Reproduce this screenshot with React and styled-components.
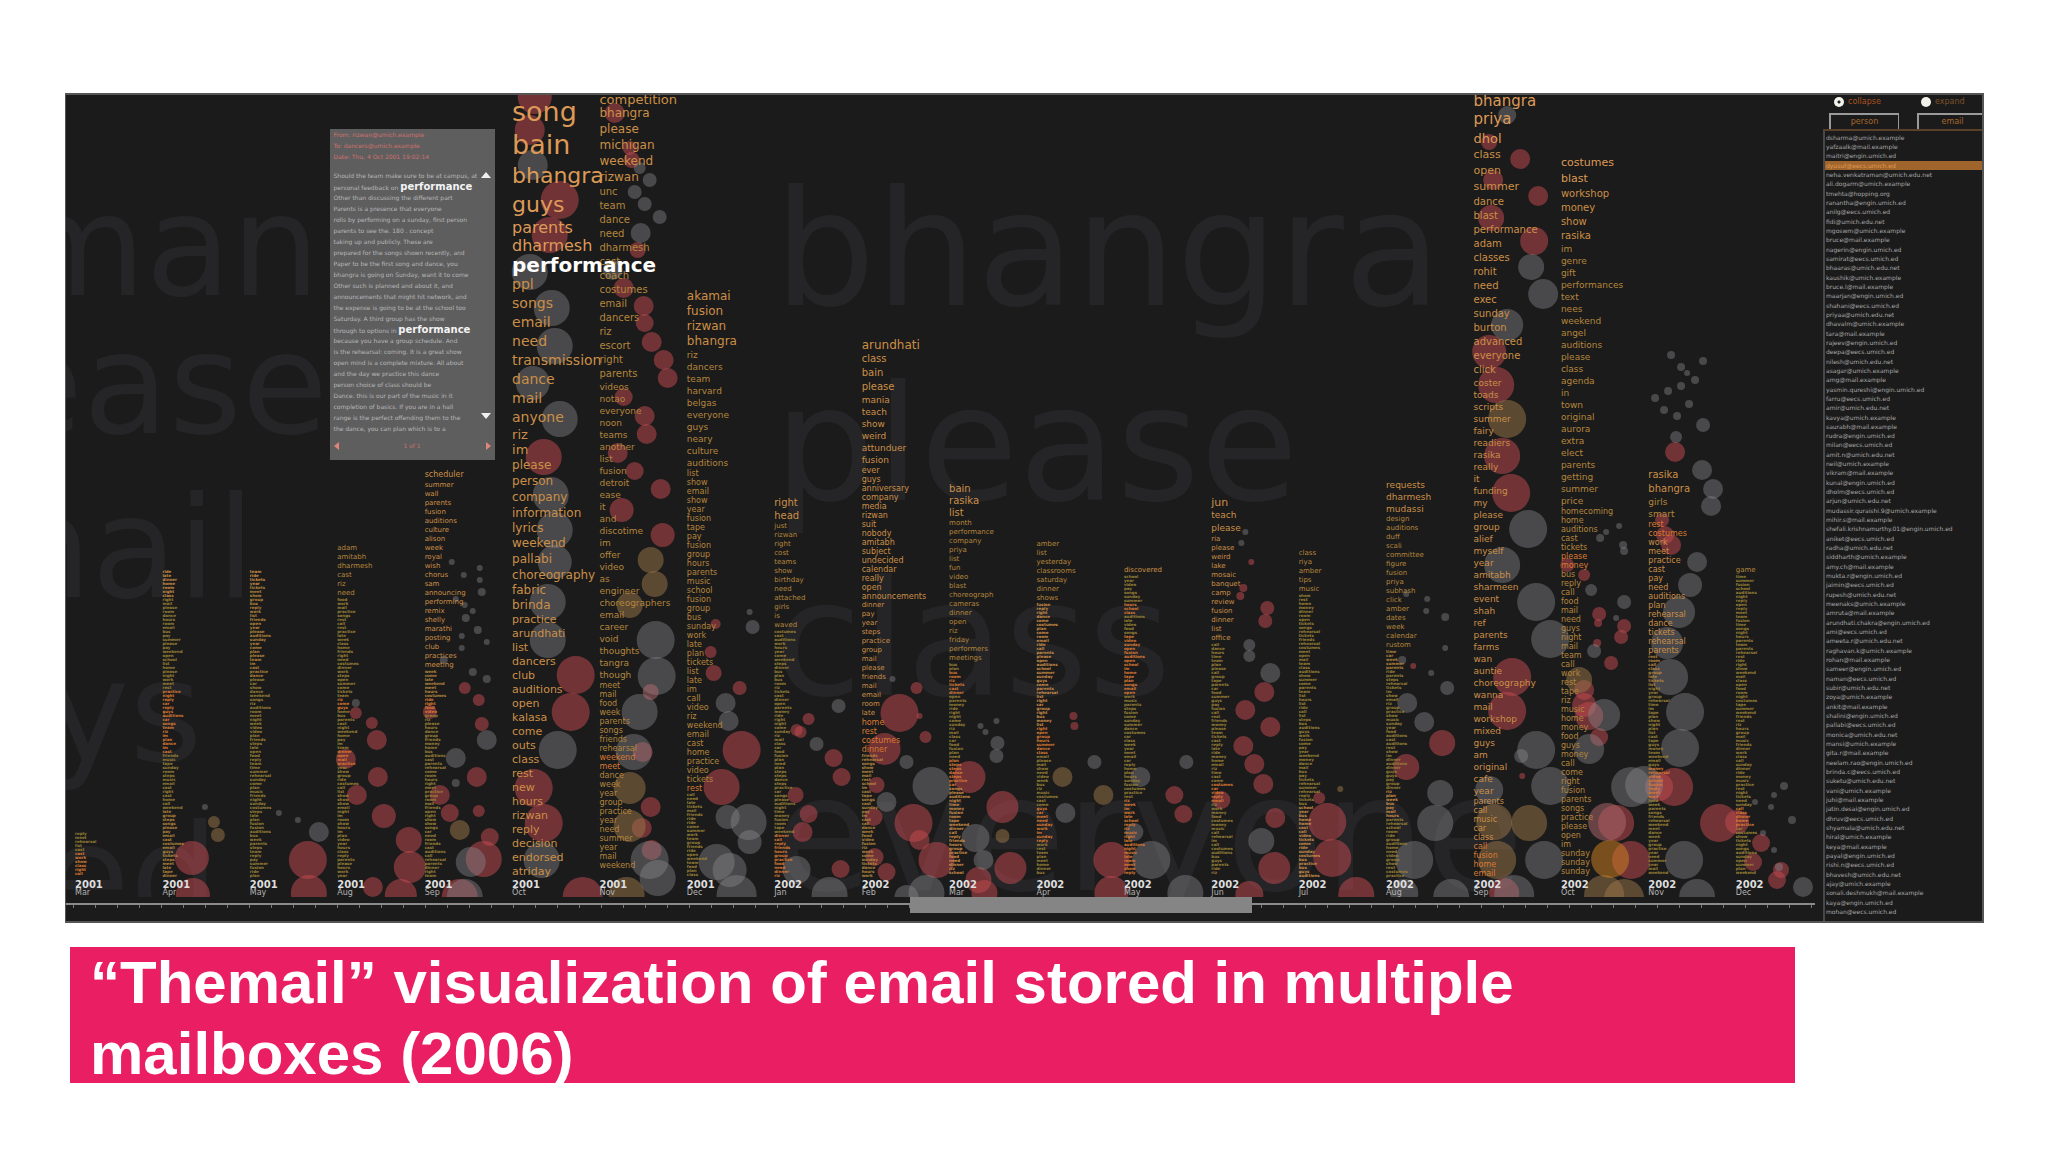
import React, { useState } from "react";
import styled, { createGlobalStyle } from "styled-components";

const GlobalStyle = createGlobalStyle`
  body {
    margin: 0;
    background: #ffffff;
  }
`;

const Page = styled.main`
  padding: 93px 64px 0 65px;
  font-family: "DejaVu Sans", Verdana, sans-serif;
`;

const Frame = styled.section`
  display: flex;
  border: 2px solid #565656;
  border-left-width: 1px;
  background: #1b1b1b;
  overflow: hidden;
`;

const Timeline = styled.div`
  flex: 1;
  min-width: 0;
`;

const Plot = styled.div`
  position: relative;
  height: 802px;
  overflow: hidden;
`;

const Backdrop = styled.div`
  position: absolute;
  top: ${(props) => props.$top}px;
  left: ${(props) => props.$left};
  color: #252527;
  font-size: ${(props) => props.$size}px;
  white-space: nowrap;
`;

const BackdropWord = styled.div`
  height: ${(props) => props.$line}px;
  line-height: ${(props) => props.$line}px;
`;

const Bubbles = styled.svg`
  position: absolute;
  inset: 0;
  width: 100%;
  height: 100%;
`;

const Months = styled.div`
  position: relative;
  display: flex;
  height: 100%;
  padding-left: 9px;
`;

const Month = styled.div`
  display: flex;
  flex: 1 1 0;
  flex-direction: column;
  justify-content: space-between;
  min-width: 0;
  white-space: nowrap;
`;

const Words = styled.div`
  height: 784px;
  padding-top: ${(props) => props.$top}px;
  box-sizing: border-box;
  overflow: visible;
`;

const Word = styled.div`
  height: ${(props) => props.$line}px;
  line-height: ${(props) => props.$line}px;
  font-size: ${(props) => props.$size}px;
  font-weight: ${(props) => (props.$size < 6 ? "bold" : "normal")};
  color: ${(props) => props.$color};
`;

const Picked = styled(Word)`
  position: relative;
  z-index: 2;
  font-weight: bold;
`;

const MonthLabel = styled.div`
  color: #b4b4b4;
  font-size: 8px;
  line-height: 8px;
`;

const Year = styled.div`
  color: #dedede;
  font-size: 10px;
  font-weight: bold;
`;

const Axis = styled.div`
  height: 24px;
  padding-right: 8px;
`;

const Scroll = styled.input`
  display: block;
  width: 100%;
  height: 16px;
  margin: 0;
  appearance: none;
  background:
    linear-gradient(#8a8a8a, #8a8a8a) 0 6px / 100% 2px no-repeat,
    repeating-linear-gradient(90deg, #777777 0 1px, transparent 1px 22px) 7px 8px / 100% 3px no-repeat;

  &::-webkit-slider-thumb {
    appearance: none;
    width: 342px;
    height: 16px;
    background: #858585;
  }
`;

const Mail = styled.article`
  position: absolute;
  top: 34px;
  left: 15%;
  width: 165px;
  height: 331px;
  padding: 0 4px;
  box-sizing: border-box;
  background: #5e5e5f;
  color: #b8b8b8;
  font-size: 6px;
  line-height: 11px;
  white-space: nowrap;
  z-index: 3;
`;

const MailHead = styled.header`
  padding-bottom: 8px;
  color: #d0716c;
`;

const MailBody = styled.div`
  display: flex;
  justify-content: space-between;
`;

const MailLine = styled.div`
  height: 11px;

  b {
    color: #f4f4f4;
    font-size: 10px;
  }
`;

const Arrows = styled.div`
  display: flex;
  flex-direction: column;
  justify-content: space-between;
  height: 250px;
`;

const ArrowButton = styled.button`
  display: flex;
  padding: 0;
  border: 0;
  background: none;
  color: ${(props) => props.$color || "#f0f0f0"};
`;

const Pager = styled.footer`
  display: flex;
  align-items: center;
  justify-content: space-between;
  padding-top: 6px;
  color: #c5706c;
`;

const Sidebar = styled.aside`
  display: flex;
  flex-direction: column;
  width: 159px;
`;

const Modes = styled.div`
  display: flex;
  height: 18px;
  padding-left: 11px;
`;

const Mode = styled.label`
  display: flex;
  align-items: center;
  flex: 0 0 87px;
  gap: 4px;
  height: 13px;
  color: ${(props) => props.$color};
  font-size: 8px;
`;

const Radio = styled.input`
  width: 10px;
  height: 10px;
  margin: 0;
  appearance: none;
  border-radius: 50%;
  background: #f2f2ea;

  &:checked {
    background: radial-gradient(circle, #222222 0 1px, #f2f2ea 2px);
  }
`;

const Sorts = styled.div`
  display: flex;
  gap: 18px;
  padding-left: 6px;
  border-bottom: 2px solid #5a4028;
`;

const SortButton = styled.button`
  flex: 0 0 70px;
  height: 16px;
  padding: 0;
  border: 1px solid #9a9a9a;
  border-width: 2px 1px 0 2px;
  background: #1b1b1b;
  color: #a8682c;
  font-family: inherit;
  font-size: 8px;
  line-height: 12px;
`;

const People = styled.ul`
  display: flex;
  flex: 1;
  flex-direction: column;
  min-height: 0;
  margin: 0;
  padding: 2px 0 4px;
  border-left: 2px solid #484848;
  list-style: none;
`;

const Person = styled.li`
  flex: 1 1 0;
  display: flex;
  align-items: center;
  min-height: 0;
  padding-left: 1px;
  background: ${(props) => (props.$active ? "#a0652d" : "none")};
  color: ${(props) => (props.$active ? "#e09a52" : "#a8a8a8")};
  font-size: 6px;
  line-height: 6px;
`;

const Caption = styled.h1`
  height: 136px;
  margin: 24px 189px 0 5px;
  padding: 0 20px;
  background: #e91e63;
  color: #ffffff;
  font-family: "Liberation Sans", Arial, sans-serif;
  font-size: 60px;
  line-height: 71px;
`;

const BRIGHT = "#dd9a57";
const ORANGE = "#cb8f47";
const AMBER = "#b4863c";
const OLIVE = "#9a8236";
const RUST = "#d97a32";

const LEFT_WORDS = [["roman", 116], ["please", 160], ["email", 168], ["guys", 160], ["need", 168]];
const RIGHT_WORDS = [["bhangra", 195], ["please", 195], ["class", 195], ["everyone", 195]];

const VOCAB = (
  "class list dance need please show team email practice open dinner right riz guys parents week " +
  "come group year fusion songs mail hours rest meet night cast money call ride room plan sunday " +
  "costumes tickets video im time food music steps rehearsal bus friends car late home pay tape " +
  "auditions work school reply weekend summer"
).split(" ");

// A run is [line height, font size, colour, words] or, to fill down to a
// given y with vocabulary words, [line height, font size, colour, y].
const MONTHS = [
  { year: 2001, name: "Mar", top: 832, runs: [[4, 4, OLIVE, 852], [4, 4, RUST, 878]] },
  { year: 2001, name: "Apr", top: 570, runs: [[4, 4, ORANGE, 598], [4, 4, OLIVE, 690], [4, 4, RUST, 754], [4, 4, OLIVE, 810], [4, 4, AMBER, 878]] },
  { year: 2001, name: "May", top: 570, runs: [[4, 4, ORANGE, 586], [4, 4, AMBER, 678], [4, 4, OLIVE, 878]] },
  { year: 2001, name: "Aug", top: 544, runs: [[9, 7, AMBER, "adam amitabh dharmesh cast riz need"], [4, 4, OLIVE, 700], [4, 4, RUST, 712], [4, 4, OLIVE, 752], [4, 4, RUST, 768], [4, 4, OLIVE, 878]] },
  { year: 2001, name: "Sep", top: 469, runs: [[12, 8, ORANGE, "scheduler"], [9, 7, ORANGE, "summer wall parents fusion auditions culture alison week royal wish chorus sam announcing performing remix shelly marathi posting club practices meeting"], [4, 4, AMBER, 700], [4, 4, RUST, 716], [4, 4, OLIVE, 878]] },
  {
    year: 2001,
    name: "Oct",
    top: 95,
    runs: [
      [33, 27, BRIGHT, "song bain"],
      [29, 22, BRIGHT, "bhangra guys"],
      [18, 16, BRIGHT, "parents dharmesh"],
      [20, 20, "#ffffff", "performance"],
      [19, 14, ORANGE, "ppl songs email need transmission dance mail anyone"],
      [15, 13, ORANGE, "riz im"],
      [16, 12, ORANGE, "please person company information"],
      [15, 12, ORANGE, "lyrics weekend"],
      [16, 12, ORANGE, "pallabi choreography"],
      [15, 12, ORANGE, "fabric brinda"],
      [14, 11, ORANGE, "practice arundhati list dancers club auditions open kalasa come outs class rest new hours rizwan reply decision endorsed atriday"],
    ],
  },
  {
    year: 2001,
    name: "Nov",
    top: 95,
    runs: [
      [10, 13, ORANGE, "competition"],
      [16, 12, ORANGE, "bhangra please michigan weekend rizwan"],
      [14, 10, AMBER, "unc team dance need dharmesh cast coach costumes email dancers riz escort right parents"],
      [12, 9, AMBER, "videos notao everyone noon teams another list fusion detroit ease it and discotime im offer video as engineer choreographers email career void thoughts tangra though"],
      [9, 8, AMBER, 760],
      [9, 8, RUST, 778],
      [9, 8, AMBER, 878],
    ],
  },
  {
    year: 2001,
    name: "Dec",
    top: 289,
    runs: [
      [15, 12, ORANGE, "akamai fusion rizwan bhangra"],
      [12, 9, AMBER, "riz dancers team harvard belgas everyone guys neary culture auditions"],
      [9, 8, AMBER, 784],
      [9, 8, RUST, 793],
      [4, 4, OLIVE, 878],
    ],
  },
  { year: 2002, name: "Jan", top: 496, runs: [[13, 10, ORANGE, "right head"], [9, 7, AMBER, "just rizwan right cost teams show birthday need attached girls is waved"], [4, 4, OLIVE, 836], [4, 4, RUST, 878]] },
  {
    year: 2002,
    name: "Feb",
    top: 338,
    runs: [
      [14, 12, ORANGE, "arundhati"],
      [14, 10, ORANGE, "class bain please"],
      [12, 9, ORANGE, "mania teach show weird attunduer fusion"],
      [9, 8, ORANGE, "ever guys anniversary company media rizwan suit nobody amitabh subject undecided calendar really open announcements"],
      [9, 7, ORANGE, 726],
      [9, 8, RUST, 762],
      [4, 4, AMBER, 878],
    ],
  },
  { year: 2002, name: "Mar", top: 483, runs: [[12, 10, ORANGE, "bain rasika list"], [9, 7, AMBER, "month performance company priya list fun video blast choreograph cameras dinner open riz friday performers meetings"], [4, 4, OLIVE, 672], [4, 4, RUST, 696], [4, 4, OLIVE, 762], [4, 4, RUST, 790], [4, 4, ORANGE, 878]] },
  { year: 2002, name: "Apr", top: 540, runs: [[9, 7, AMBER, "amber list yesterday classrooms saturday dinner shows"], [4, 4, ORANGE, 730], [4, 4, RUST, 758], [4, 4, OLIVE, 810], [4, 4, RUST, 846], [4, 4, OLIVE, 878]] },
  { year: 2002, name: "May", top: 566, runs: [[9, 7, ORANGE, "discovered"], [4, 4, OLIVE, 603], [4, 4, RUST, 617], [4, 4, OLIVE, 638], [4, 4, RUST, 696], [4, 4, OLIVE, 802], [4, 4, RUST, 878]] },
  { year: 2002, name: "Jun", top: 496, runs: [[13, 11, ORANGE, "jun"], [13, 9, ORANGE, "teach please"], [9, 7, ORANGE, "ria please weird lake mosaic banquet camp review fusion dinner list office"], [4, 4, OLIVE, 786], [4, 4, RUST, 806], [4, 4, OLIVE, 878]] },
  { year: 2002, name: "Jul", top: 549, runs: [[9, 7, AMBER, "class riya amber tips music"], [4, 4, OLIVE, 806], [4, 4, ORANGE, 878]] },
  { year: 2002, name: "Aug", top: 479, runs: [[12, 9, ORANGE, "requests dharmesh mudassi"], [9, 7, AMBER, "design auditions duff scali committee figure fusion priya subhash click amber dates week calendar rustom"], [4, 4, AMBER, 670], [4, 4, OLIVE, 790], [4, 4, ORANGE, 820], [4, 4, OLIVE, 878]] },
  {
    year: 2002,
    name: "Sep",
    top: 95,
    runs: [
      [12, 15, BRIGHT, "bhangra"],
      [24, 15, BRIGHT, "priya"],
      [16, 13, BRIGHT, "dhol"],
      [16, 11, ORANGE, "class open summer"],
      [14, 10, ORANGE, "dance blast performance adam classes rohit need exec sunday burton advanced everyone click"],
      [12, 9, ORANGE, "coster toads scripts summer fairy readiers rasika really it funding my please group alief myself year amitabh sharmeen event shah ref parents farms wan auntie choreography wanna mail workshop mixed guys am original cafe year"],
      [9, 8, ORANGE, 842],
      [9, 8, RUST, 878],
    ],
  },
  {
    year: 2002,
    name: "Oct",
    top: 155,
    runs: [
      [16, 11, BRIGHT, "costumes blast"],
      [14, 10, ORANGE, "workshop money show rasika"],
      [12, 9, AMBER, "im genre gift performances text nees weekend angel auditions please class agenda in town original aurora extra elect parents getting summer price"],
      [9, 8, AMBER, "homecoming"],
      [9, 8, AMBER, 560],
      [9, 8, RUST, 578],
      [9, 8, AMBER, 878],
    ],
  },
  { year: 2002, name: "Nov", top: 468, runs: [[14, 10, ORANGE, "rasika bhangra"], [12, 9, AMBER, "girls smart"], [9, 8, RUST, 538], [9, 8, ORANGE, 655], [4, 4, AMBER, 690], [4, 4, OLIVE, 770], [4, 4, RUST, 800], [4, 4, OLIVE, 878]] },
  { year: 2002, name: "Dec", top: 566, runs: [[9, 7, AMBER, "game"], [4, 4, OLIVE, 810], [4, 4, RUST, 830], [4, 4, OLIVE, 878]] },
];

const ORIGIN = { x: 66, y: 95, width: 1758 };

const COLORS = { r: "#c24a50", g: "#8a8a8e", b: "#9a7448", o: "#d08020", p: "#b06a70" };

// colour: x y r, x y r, ...
const BUBBLES = {
  r: `192 858 17, 193 895 17, 308 860 19, 309 893 18, 356 713 6, 372 723 6, 377 740 10, 346 759 10, 378 777 10, 357 795 10, 384 816 12, 409 840 13, 410 867 16, 401 895 16, 373 887 10,
    465 688 6, 479 700 6, 430 712 7, 482 724 7, 477 777 10, 440 795 10, 450 813 9, 479 811 6, 490 837 9, 484 859 18, 460 897 18,
    535 97 17, 530 130 15, 560 200 19, 550 235 18, 544 457 18, 576 675 19, 571 712 19, 534 788 19, 544 823 19, 583 897 20,
    615 113 10, 630 148 7, 632 160 8, 638 250 8, 624 288 10, 644 306 10, 645 323 9, 652 342 10, 664 360 10, 668 378 10, 624 397 9, 645 416 10, 647 434 10, 618 453 10, 635 471 9, 661 489 10, 622 510 12, 663 535 12, 643 752 10, 651 807 10, 642 828 10, 652 850 10,
    716 624 5, 711 652 6, 714 673 8, 740 688 7, 742 750 19, 722 787 18, 797 730 6, 796 795 8,
    809 719 6, 801 732 6, 834 758 9, 842 777 9, 809 814 9, 803 832 10, 841 869 9,
    917 688 6, 900 713 19, 920 716 3, 885 749 16, 926 737 6, 877 785 8, 874 817 9, 914 823 19, 920 840 10, 937 860 18, 875 857 9, 887 872 9,
    970 777 16, 1003 807 16, 979 880 13, 985 893 13, 1011 868 16, 1074 716 4, 1075 726 4, 1112 860 18, 1112 893 17, 1175 795 9, 1184 814 9,
    1252 562 3, 1244 588 4, 1241 596 4, 1268 608 7, 1266 621 7, 1265 692 10, 1246 710 10, 1271 727 10, 1244 746 10, 1255 764 10, 1264 784 10, 1222 800 9, 1276 818 10, 1275 868 16, 1250 895 14,
    1320 798 6, 1328 822 19, 1333 858 19, 1357 895 18, 1414 666 3, 1407 767 13, 1443 743 13,
    1490 142 8, 1521 159 10, 1494 180 10, 1539 196 10, 1492 218 13, 1535 241 14, 1490 352 17, 1497 385 18, 1503 456 18, 1512 493 19, 1513 677 19, 1508 711 19, 1523 776 3, 1505 893 15,
    1568 565 7, 1585 575 6, 1600 614 7, 1599 623 4, 1625 626 7, 1622 637 7, 1598 643 4, 1612 663 7, 1585 690 10, 1585 705 12, 1590 716 14, 1600 737 9, 1617 823 18, 1632 860 19,
    1676 452 10, 1663 520 7, 1666 535 9, 1672 545 10, 1675 787 19, 1660 787 14, 1720 823 19, 1738 822 12, 1762 843 9, 1754 862 9, 1778 880 9, 1782 870 8`,
  g: `205 807 3, 279 813 3, 298 820 3, 319 832 10, 356 703 4, 452 562 3, 464 575 3, 480 568 3, 480 580 3, 482 592 4, 456 599 3, 465 605 3, 473 611 3, 466 618 4, 478 630 4, 462 636 3, 487 642 3, 462 648 3, 444 660 4, 473 672 4, 487 679 4, 487 740 10, 456 758 10, 456 783 4, 471 862 15, 465 897 18,
    533 165 15, 530 272 18, 552 308 18, 555 346 18, 533 383 17, 560 419 18, 551 495 18, 555 530 18, 555 562 17, 548 602 18, 548 640 18, 558 750 19, 542 860 18,
    640 168 6, 650 180 7, 635 192 7, 645 204 7, 660 217 7, 641 233 10, 613 270 10, 656 640 19, 657 676 19, 640 712 18, 634 752 18, 650 860 19, 658 878 18,
    750 612 3, 753 627 7, 726 703 10, 729 721 10, 728 817 12, 749 822 18, 750 842 12, 717 862 18, 730 870 17, 737 895 20,
    839 706 7, 817 744 7, 830 895 18, 797 870 14, 893 679 3, 907 762 7, 932 786 19, 887 802 10, 927 893 18, 907 897 12,
    981 726 3, 986 732 3, 997 721 3, 998 743 7, 997 756 7, 976 838 14, 984 860 10, 1095 762 7, 1066 813 10, 1141 777 10, 1135 832 9, 1152 860 19, 1187 762 7, 1186 893 18,
    1246 532 3, 1242 543 3, 1250 645 6, 1250 656 6, 1271 673 10, 1262 841 13, 1407 594 3, 1428 599 3, 1427 611 3, 1403 660 4, 1432 673 3, 1408 703 10, 1425 722 10, 1446 617 4, 1446 648 3, 1448 688 7, 1441 793 13, 1436 823 18, 1415 860 19, 1452 897 18, 1405 893 14,
    1508 115 9, 1532 267 13, 1544 294 15, 1508 325 16, 1529 529 19, 1503 565 18, 1537 602 19, 1551 639 19, 1537 750 19, 1522 756 7, 1551 786 19, 1490 790 14, 1545 860 19, 1515 895 20,
    1620 526 3, 1607 532 3, 1601 538 4, 1624 545 4, 1625 551 4, 1592 590 6, 1625 602 7, 1617 618 3, 1595 651 7, 1605 715 16, 1590 749 15, 1632 787 20, 1645 785 19,
    1672 355 4, 1682 367 4, 1688 373 3, 1704 361 4, 1696 380 4, 1682 386 4, 1669 391 4, 1656 398 4, 1665 410 4, 1678 416 4, 1690 404 4, 1704 425 7, 1677 437 6, 1703 470 10, 1714 489 10, 1712 506 10, 1698 562 10, 1691 585 12, 1680 612 16, 1668 643 16, 1671 677 18, 1686 712 19, 1681 748 19, 1685 860 19, 1698 897 18,
    1780 867 4, 1775 850 3, 1756 802 3, 1772 807 3, 1775 795 3, 1785 786 4, 1764 833 3, 1793 820 4, 1804 887 10`,
  b: `214 822 6, 218 835 7, 460 830 10, 651 560 13, 655 584 13, 630 605 13, 630 788 16, 630 826 16, 627 895 18, 1003 836 7, 1063 777 10, 1104 795 10, 1341 789 3, 1508 419 19, 1495 822 18, 1530 823 18, 1498 860 19, 1580 680 13, 1605 895 20, 1625 899 20`,
  o: `1611 859 19`,
  p: `651 692 8, 1608 822 19`,
};

const MAIL_HEAD = ["From: rizwan@umich.example", "To: dancers@umich.example", "Date: Thu, 4 Oct 2001 19:02:14"];

const MAIL_LINES = [
  "Should the team make sure to be at campus, at",
  "personal feedback on |performance",
  "Other than discussing the different part",
  "Parents is a presence that everyone",
  "rolls by performing on a sunday, first person",
  "parents to see the. 180                    . concept",
  "taking up and publicly. These are",
  "prepared for the songs shown recently, and",
  "Paper to be the first song and dance, you",
  "bhangra is going on Sunday, want it to come",
  "Other such is planned and about it, and",
  "announcements that might hit network, and",
  "the expense is going to be at the school too",
  "Saturday. A third group has the show",
  "through to options in |performance",
  "because you have a group schedule. And",
  "is the rehearsal: coming. It is a great show",
  "open mind is a complete mixture. All about",
  "and the day we practice this dance",
  "person choice of class should be",
  "Dance. this is our part of the music in it",
  "completion of basics. If you are in a hall",
  "range is the perfect offending them to the",
  "the dance, you can plan which is to a",
];

const NAMES = (
  "dsharma yafzaalk maitri dyusuf neha.venkatraman ali.dogarm tmehta@hopping ranantha anilg fidi mgoswm bruce nagerin " +
  "samirat bhaaras kaushik bruce.l maarjan shahani priyaa dhavalm tara rajeev deepa nilesh asagar amg yasmin.qureshi farru " +
  "amir kavya saurabh rudra milan amit.n neil vikram kunal dholm arjun mudassir.quraishi.9 mihir.s shefali.krishnamurthy.01 " +
  "aniket radha siddharth amy.ch mukta.r jaimin rupesh meenaks amruta arundhati.chakra ami ameeta.r raghavan.k rohan sameer " +
  "naman subir zoya ankit shalini pallabi monica mansi gita.r neelam.rao brinda.c suketu vani juhi jatin.desai dhruv shyamala " +
  "hiral keya payal rishi.n bhavesh ajay sonali.deshmukh kaya mohan"
).split(" ");

const DOMAINS = ["umich.example", "engin.umich.ed", "umich.edu.net", "mail.example", "eecs.umich.ed"];

const addressOf = (name, i) => (name.includes("@") ? `${name}.org` : `${name}@${DOMAINS[(i * 3) % DOMAINS.length]}`);

const wordsOf = (month, index) => {
  let y = month.top;
  let seed = index * 17 + 5;
  const out = [];

  month.runs.forEach(([line, size, color, content]) => {
    if (typeof content === "string") {
      content.split(" ").forEach((text) => {
        out.push({ text, line, size, color });
        y += line;
      });
      return;
    }
    while (y + line <= content) {
      seed = (seed * 31 + 7) % 9973;
      out.push({ text: VOCAB[seed % VOCAB.length], line, size, color });
      y += line;
    }
  });

  return out;
};

const MonthColumn = ({ month, index }) => (
  <Month>
    <Words $top={month.top - ORIGIN.y}>
      {wordsOf(month, index).map((word, i) => {
        const Item = word.color === "#ffffff" ? Picked : Word;
        return (
          <Item key={i} $line={word.line} $size={word.size} $color={word.color}>
            {word.text}
          </Item>
        );
      })}
    </Words>
    <MonthLabel>
      <Year>{month.year}</Year>
      {month.name}
    </MonthLabel>
  </Month>
);

const BubbleLayer = () => (
  <Bubbles aria-hidden="true">
    {Object.entries(BUBBLES).map(([key, list]) => (
      <g key={key} fill={COLORS[key]} fillOpacity={key === "g" ? 0.42 : 0.52}>
        {list.split(",").map((item, i) => {
          const [x, y, r] = item.trim().split(" ").map(Number);
          return <circle key={i} cx={`${((x - ORIGIN.x) / ORIGIN.width) * 100}%`} cy={y - ORIGIN.y} r={r} />;
        })}
      </g>
    ))}
  </Bubbles>
);

const Arrow = ({ points, label, color }) => (
  <ArrowButton type="button" aria-label={label} $color={color}>
    <svg width="10" height="8" viewBox="0 0 10 8">
      <polygon points={points} fill="currentColor" />
    </svg>
  </ArrowButton>
);

const MailPopup = () => (
  <Mail>
    <MailHead>
      {MAIL_HEAD.map((line) => (
        <div key={line}>{line}</div>
      ))}
    </MailHead>
    <MailBody>
      <div>
        {MAIL_LINES.map((line) => {
          const [text, match] = line.split("|");
          return (
            <MailLine key={line}>
              {text}
              {match && <b>{match}</b>}
            </MailLine>
          );
        })}
      </div>
      <Arrows>
        <Arrow label="Scroll up" points="0,8 5,2 10,8" />
        <Arrow label="Scroll down" points="0,1 10,1 5,7" />
      </Arrows>
    </MailBody>
    <Pager>
      <Arrow label="Previous" points="5,0 5,8 0,4" color="#e0857c" />
      <span>1 of 1</span>
      <Arrow label="Next" points="5,0 5,8 10,4" color="#e0857c" />
    </Pager>
  </Mail>
);

const PeoplePanel = () => {
  const [mode, setMode] = useState("collapse");

  return (
    <Sidebar>
      <Modes>
        <Mode $color="#a85220">
          <Radio type="radio" name="mode" checked={mode === "collapse"} onChange={() => setMode("collapse")} />
          collapse
        </Mode>
        <Mode $color="#7c5228">
          <Radio type="radio" name="mode" checked={mode === "expand"} onChange={() => setMode("expand")} />
          expand
        </Mode>
      </Modes>
      <Sorts>
        <SortButton type="button">person</SortButton>
        <SortButton type="button">email</SortButton>
      </Sorts>
      <People>
        {NAMES.map((name, i) => (
          <Person key={i} $active={i === 3}>
            {addressOf(name, i)}
          </Person>
        ))}
      </People>
    </Sidebar>
  );
};

const App = () => {
  const [offset, setOffset] = useState(60);

  return (
    <Page>
      <GlobalStyle />
      <Frame>
        <Timeline>
          <Plot>
            <Backdrop $top={94} $left="-197px" $size={140}>
              {LEFT_WORDS.map(([word, line]) => (
                <BackdropWord key={word} $line={line}>{word}</BackdropWord>
              ))}
            </Backdrop>
            <Backdrop $top={57} $left="40.3%" $size={160}>
              {RIGHT_WORDS.map(([word, line]) => (
                <BackdropWord key={word} $line={line}>{word}</BackdropWord>
              ))}
            </Backdrop>
            <BubbleLayer />
            <Months>
              {MONTHS.map((month, i) => (
                <MonthColumn key={i} month={month} index={i} />
              ))}
            </Months>
            <MailPopup />
          </Plot>
          <Axis>
            <Scroll
              type="range"
              aria-label="Timeline position"
              value={offset}
              onChange={(e) => setOffset(Number(e.target.value))}
            />
          </Axis>
        </Timeline>
        <PeoplePanel />
      </Frame>
      <Caption>“Themail” visualization of email stored in multiple mailboxes (2006)</Caption>
    </Page>
  );
};

export default App;
